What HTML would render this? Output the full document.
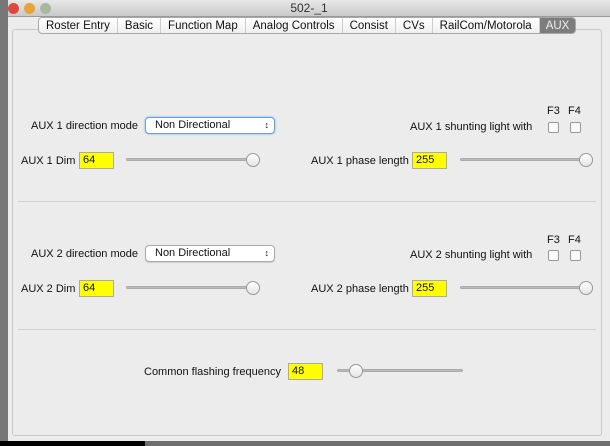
<!DOCTYPE html>
<html><head><style>
*{margin:0;padding:0;box-sizing:border-box}
body{width:610px;height:446px;overflow:hidden;background:#6e6e6e;font-family:"Liberation Sans",sans-serif;font-size:11px;color:#111;position:relative}
.a{position:absolute}
.win{left:8px;top:0;width:602px;height:441px;background:#ececec}
.title{left:8px;top:0;width:602px;height:17px;background:linear-gradient(#e8e8e8,#c9c9c9);border-bottom:1px solid #9a9a9a;text-align:center;font-size:12px;line-height:16px;color:#333}
.dot{width:11px;height:11px;border-radius:50%;top:3px}
.panel{left:12px;top:29px;width:590px;height:407px;border:1px solid #c8c8c8;border-radius:3px;background:#ececec}
.tabs{left:38px;top:17px;height:17px;display:flex;border:1px solid #a8a8a8;border-radius:4px;background:linear-gradient(#fff,#f0f0f0);font-size:11.5px;line-height:16px;overflow:hidden}
.tabs span{padding:0 7px 0 7px;border-right:1px solid #ccc}
.tabs span.s{background:#7d7d7d;color:#eee;border:none;padding:0 6px}
.sep{left:18px;width:578px;height:1px;background:#d2d2d2}
.lbl{white-space:nowrap}
.box{width:35px;height:17px;background:#ffff00;border:1px solid #aaa;padding-left:3px;line-height:15px}
.sel{height:17px;border:1px solid #aaa;border-radius:4px;background:#fff;padding-left:9px;line-height:15px;box-shadow:0 1px 1px #ccc}
.sel:after{content:"\2195";position:absolute;right:5px;top:0;font-size:9px}
.track{height:3px;background:#bbb;border-radius:2px;border:1px solid #aaa}
.knob{width:14px;height:14px;border-radius:50%;background:linear-gradient(#fff,#e4e4e4);border:1px solid #999}
.cb{width:11px;height:11px;border:1px solid #999;border-radius:2px;background:#fafafa}
</style></head><body>
<div class="a" style="left:0;top:0;width:8px;height:446px;background:#777"></div>
<div class="a win"></div>
<div class="a" style="left:0;top:441px;width:145px;height:5px;background:#000"></div>
<div class="a title">502-_1</div>
<div class="a dot" style="left:8px;background:#e0483e;left:8px"></div>
<div class="a dot" style="left:24px;background:#e5a53a"></div>
<div class="a dot" style="left:40px;background:#a9b79c"></div>
<div class="a panel"></div>
<div class="a tabs"><span>Roster Entry</span><span>Basic</span><span>Function Map</span><span>Analog Controls</span><span>Consist</span><span>CVs</span><span>RailCom/Motorola</span><span class="s">AUX</span></div>

<div class="a sep" style="top:201px"></div>
<div class="a sep" style="top:329px"></div>

<div class="a lbl" style="left:31px;top:120px">AUX 1 direction mode</div>
<div class="a sel" style="left:145px;top:117px;width:130px;border-color:#6a9fd8;box-shadow:0 0 2px #7ab0f0">Non Directional</div>
<div class="a lbl" style="left:21px;top:155px">AUX 1 Dim</div>
<div class="a box" style="left:79px;top:152px">64</div>
<div class="a track" style="left:126px;top:158px;width:130px"></div>
<div class="a knob" style="left:246px;top:153px"></div>
<div class="a lbl" style="left:547px;top:105px">F3</div>
<div class="a lbl" style="left:568px;top:105px">F4</div>
<div class="a lbl" style="left:410px;top:121px">AUX 1 shunting light with</div>
<div class="a cb" style="left:548px;top:122px"></div>
<div class="a cb" style="left:570px;top:122px"></div>
<div class="a lbl" style="left:311px;top:155px">AUX 1 phase length</div>
<div class="a box" style="left:412px;top:152px">255</div>
<div class="a track" style="left:460px;top:158px;width:126px"></div>
<div class="a knob" style="left:579px;top:153px"></div>

<div class="a lbl" style="left:31px;top:248px">AUX 2 direction mode</div>
<div class="a sel" style="left:145px;top:245px;width:130px">Non Directional</div>
<div class="a lbl" style="left:21px;top:283px">AUX 2 Dim</div>
<div class="a box" style="left:79px;top:280px">64</div>
<div class="a track" style="left:126px;top:286px;width:130px"></div>
<div class="a knob" style="left:246px;top:281px"></div>
<div class="a lbl" style="left:547px;top:234px">F3</div>
<div class="a lbl" style="left:568px;top:234px">F4</div>
<div class="a lbl" style="left:410px;top:249px">AUX 2 shunting light with</div>
<div class="a cb" style="left:548px;top:250px"></div>
<div class="a cb" style="left:570px;top:250px"></div>
<div class="a lbl" style="left:311px;top:283px">AUX 2 phase length</div>
<div class="a box" style="left:412px;top:280px">255</div>
<div class="a track" style="left:460px;top:286px;width:126px"></div>
<div class="a knob" style="left:579px;top:281px"></div>

<div class="a lbl" style="left:144px;top:366px">Common flashing frequency</div>
<div class="a box" style="left:288px;top:363px">48</div>
<div class="a track" style="left:337px;top:369px;width:126px"></div>
<div class="a knob" style="left:349px;top:364px"></div>
</body></html>
